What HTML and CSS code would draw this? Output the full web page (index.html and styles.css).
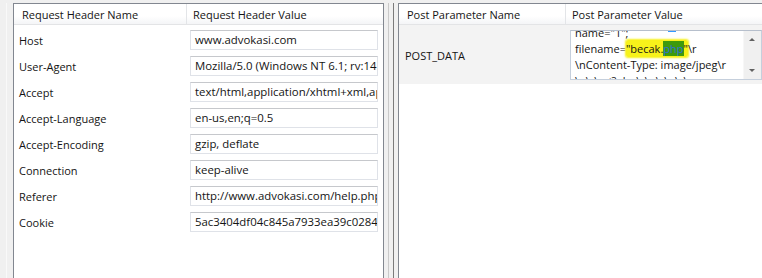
FILE: index.html
```html
<!DOCTYPE html>
<html>
<head>
<meta charset="utf-8">
<link rel="stylesheet" href="styles.css">
</head>
<body>
<div class="window">
  <div class="edge"></div>
  <section class="panel panel-left">
    <div class="header">
      <div class="hcell col-name-l">Request Header Name</div>
      <div class="hcell col-val-l">Request Header Value</div>
    </div>
    <div class="rows">
      <div class="row"><div class="label">Host</div><div class="field">www.advokasi.com</div></div>
      <div class="row"><div class="label">User-Agent</div><div class="field">Mozilla/5.0 (Windows NT 6.1; rv:14.0) Gecko/20100101 Firefox/14.0.1</div></div>
      <div class="row"><div class="label">Accept</div><div class="field">text/html,application/xhtml+xml,application/xml;q=0.9,*/*;q=0.8</div></div>
      <div class="row"><div class="label">Accept-Language</div><div class="field">en-us,en;q=0.5</div></div>
      <div class="row"><div class="label">Accept-Encoding</div><div class="field">gzip, deflate</div></div>
      <div class="row"><div class="label">Connection</div><div class="field">keep-alive</div></div>
      <div class="row"><div class="label">Referer</div><div class="field">http://www.advokasi.com/help.php</div></div>
      <div class="row"><div class="label">Cookie</div><div class="field">5ac3404df04c845a7933ea39c0284284</div></div>
    </div>
  </section>
  <div class="splitter"><div class="split-light"></div><div class="split-dark"></div></div>
  <section class="panel panel-right">
    <div class="header">
      <div class="hcell col-name-r">Post Parameter Name</div>
      <div class="hcell col-val-r">Post Parameter Value</div>
    </div>
    <div class="post-row">
      <div class="post-label">POST_DATA</div>
      <div class="textarea">
        <div class="ta-text">
          <div class="ta-line">name="1";</div>
          <div class="ta-line">filename=<span class="mark">"becak.<span class="sel">php</span>"</span>\r</div>
          <div class="ta-line">\nContent-Type: image/jpeg\r</div>
          <div class="ta-line">\n\r\n&lt;?php\r\n\r\n\r\n</div>
        </div>
        <div class="caret"></div>
        <div class="scrollbar">
          <div class="arrow up"></div>
          <div class="arrow down"></div>
        </div>
      </div>
    </div>
  </section>
</div>
</body>
</html>
```
FILE: styles.css
```css
html, body {
  margin: 0;
  padding: 0;
}
body {
  width: 762px;
  height: 278px;
  overflow: hidden;
  background: #f0f0f0;
  font-family: "Open Sans", "Noto Sans", sans-serif;
  font-size: 11px;
  color: #141414;
}
.window {
  display: flex;
  height: 278px;
  padding-top: 3px;
  box-sizing: border-box;
}
.edge {
  width: 6px;
  margin-right: 6px;
  border-right: 1px solid #f9f9f9;
  flex: none;
}
.panel {
  background: #fff;
  border-top: 1px solid #828790;
  border-left: 1px solid #828790;
  flex: none;
  height: 300px;
}
.panel-left {
  width: 369px;
  border-right: 1px solid #828790;
}
.panel-right {
  width: 400px;
}
.header {
  display: flex;
  height: 20px;
  border-bottom: 1px solid #e3e4e6;
  background: linear-gradient(#ffffff, #ffffff 60%, #f4f5f7);
}
.hcell {
  line-height: 22px;
  padding-left: 8px;
  box-sizing: border-box;
  white-space: nowrap;
  overflow: hidden;
}
.col-name-l {
  width: 173px;
  border-right: 1px solid #e3e5e8;
}
.col-val-l {
  flex: 1;
  padding-left: 6px;
}
.col-name-r {
  width: 167px;
  border-right: 1px solid #e3e5e8;
}
.col-val-r {
  flex: 1;
  padding-left: 6px;
}
.rows {
  padding-top: 2px;
}
.row {
  display: flex;
  align-items: center;
  height: 26px;
}
.label {
  width: 176px;
  padding-left: 5px;
  box-sizing: border-box;
  flex: none;
}
.field {
  width: 188px;
  height: 20px;
  box-sizing: border-box;
  border: 1px solid #dfe2e8;
  border-top-color: #c6c8cc;
  padding-left: 4px;
  line-height: 18px;
  font-size: 11.4px;
  white-space: nowrap;
  overflow: hidden;
  flex: none;
}
.splitter {
  width: 14px;
  flex: none;
  display: flex;
  padding-left: 4px;
  box-sizing: border-box;
}
.split-light {
  width: 1px;
  background: #c9c9c9;
  margin-right: 4px;
}
.split-dark {
  width: 1px;
  background: #7b7b7b;
}
.post-row {
  display: flex;
  align-items: center;
  height: 59px;
  background: #f3f3f3;
}
.post-label {
  width: 171px;
  padding-left: 6px;
  padding-top: 2px;
  box-sizing: border-box;
  flex: none;
}
.textarea {
  position: relative;
  width: 192px;
  height: 50px;
  box-sizing: border-box;
  border: 1px solid #c5cfdc;
  border-top-color: #b6bfcc;
  background: #fff;
  overflow: hidden;
  flex: none;
}
.ta-text {
  margin-top: -6px;
  padding-left: 4px;
  line-height: 16px;
  white-space: nowrap;
}
.mark {
  background: #f7f21a;
  box-shadow: 0 0 2px 1px #f7f21a;
  border-radius: 2px;
  padding: 1px 0;
}
.sel {
  background: #3d9a0c;
  color: #2f6fd6;
}
.caret {
  position: absolute;
  top: 0;
  left: 97px;
  width: 8px;
  height: 1px;
  background: #3399ff;
}
.scrollbar {
  position: absolute;
  top: 0;
  right: 0;
  width: 17px;
  height: 48px;
  background: #f0f0f0;
  border-left: 1px solid #f7f7f7;
}
.arrow {
  position: absolute;
  left: 5px;
  width: 0;
  height: 0;
  border-left: 3px solid transparent;
  border-right: 3px solid transparent;
}
.arrow.up {
  top: 7px;
  border-bottom: 3px solid #606060;
}
.arrow.down {
  bottom: 7px;
  border-top: 3px solid #606060;
}
```
